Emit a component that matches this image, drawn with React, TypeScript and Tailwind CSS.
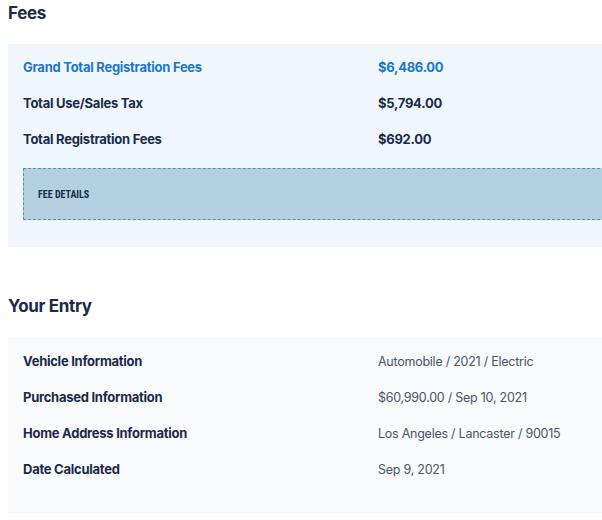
const FEES = [
  { label: "Grand Total Registration Fees", value: "$6,486.00", highlight: true },
  { label: "Total Use/Sales Tax", value: "$5,794.00", highlight: false },
  { label: "Total Registration Fees", value: "$692.00", highlight: false },
];

const ENTRY = [
  { label: "Vehicle Information", value: "Automobile / 2021 / Electric" },
  { label: "Purchased Information", value: "$60,990.00 / Sep 10, 2021" },
  { label: "Home Address Information", value: "Los Angeles / Lancaster / 90015" },
  { label: "Date Calculated", value: "Sep 9, 2021" },
];

export default function App() {
  return (
    <div
      className="w-[602px] h-[520px] overflow-hidden bg-white text-[#1b2a4b]"
      style={{ fontFamily: "Inter, 'Noto Sans', sans-serif" }}
    >
      <div className="w-[640px] pl-2">
        <h2 className="h-[44px] pt-[1px] text-[17px] font-bold leading-[24px] tracking-[-0.02em]">Fees</h2>

        <section className="bg-[#eff7fd] pl-[15px] pt-[6px] pb-[27px]">
          {FEES.map((row) => (
            <div
              key={row.label}
              className={`grid h-9 grid-cols-[355px_1fr] items-center text-[13px] font-bold tracking-[-0.02em] ${
                row.highlight ? "text-[#1c76c4]" : "text-[#1b2a4b]"
              }`}
            >
              <span>{row.label}</span>
              <span>{row.value}</span>
            </div>
          ))}

          <div className="mt-[10px] flex h-[52px] items-center border border-dashed border-[#5f8fae] bg-[#b3cfe0] pl-[14px]">
            <span
              className="text-[10px] font-bold text-[#1b2a4b]"
              style={{ fontFamily: "'Liberation Sans Narrow', 'Roboto Condensed', Roboto, sans-serif" }}
            >
              FEE DETAILS
            </span>
          </div>
        </section>

        <h2 className="h-[90px] pt-[47px] text-[17px] font-bold leading-[24px] tracking-[-0.02em]">Your Entry</h2>

        <section className="bg-[#f8fafc] pl-[15px] pt-[7px] pb-[25px]">
          {ENTRY.map((row) => (
            <div key={row.label} className="grid h-9 grid-cols-[355px_1fr] items-center">
              <span className="text-[13px] font-bold tracking-[-0.02em] text-[#1b2a4b]">{row.label}</span>
              <span className="text-[12.5px] tracking-[-0.02em] text-[#4b5566]">{row.value}</span>
            </div>
          ))}
        </section>
      </div>
    </div>
  );
}
